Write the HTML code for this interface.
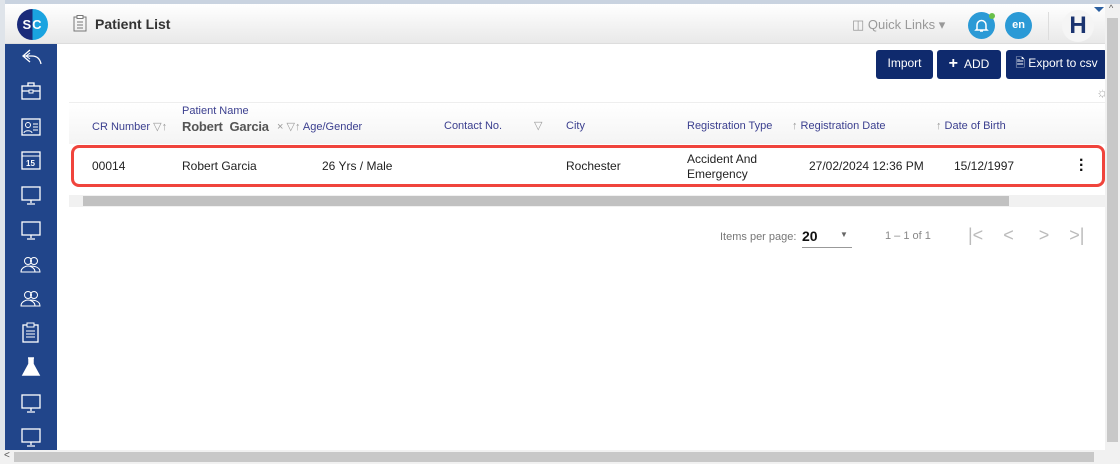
<!DOCTYPE html>
<html><head><style>
*{margin:0;padding:0;box-sizing:border-box}
body{width:1120px;height:464px;overflow:hidden;background:#fff;font-family:"Liberation Sans",sans-serif;position:relative;font-size:12px}
.a{position:absolute}
.hdr{left:5px;top:4px;width:1100px;height:40px;background:linear-gradient(#fff,#e9e9e9);border-bottom:1px solid #ddd}
.sb{left:5px;top:44px;width:52px;height:406px;background:#21458a}
.btn{background:#0f2a6d;color:#fff;border-radius:3px;height:29px;top:50px;font-size:12px;line-height:27px;text-align:center}
.th{color:#3b3f8f;font-size:11px;top:120px}
.td{color:#222;font-size:12px}
.ar{color:#999;font-size:11px}
</style></head><body>
<div class="a" style="left:0;top:0;width:1120px;height:4px;background:#c9d3e0"></div>
<div class="a" style="left:0;top:0;width:5px;height:464px;background:#dfe4ea"></div>
<div class="a hdr"></div>
<div class="a" style="left:17px;top:9px;width:31px;height:31px;border-radius:50%;background:linear-gradient(90deg,#1b2b7a 50%,#1aa3e0 50%);color:#fff;font-weight:bold;font-size:13px;line-height:31px;text-align:center;letter-spacing:1px">SC</div>
<svg class="a" style="left:73px;top:15px" width="14" height="17" viewBox="0 0 14 17"><rect x="1" y="2" width="12" height="14" fill="none" stroke="#777"/><rect x="4" y="0.5" width="6" height="3" fill="#fff" stroke="#777"/><path d="M4 7h6M4 10h6M4 13h6" stroke="#777"/></svg>
<div class="a" style="left:95px;top:16px;font-size:14px;font-weight:bold;color:#333">Patient List</div>
<div class="a" style="left:852px;top:17px;color:#999;font-size:13px">&#9707; Quick Links ▾</div>
<div class="a" style="left:968px;top:12px;width:27px;height:27px;border-radius:50%;background:#2b9ad6"></div>
<svg class="a" style="left:974px;top:18px" width="15" height="15"><path d="M3 11V7a4.5 4.5 0 0 1 9 0v4l1 1H2zM6 13h3" fill="none" stroke="#fff" stroke-width="1.5"/></svg>
<div class="a" style="left:989px;top:13px;width:6px;height:6px;border-radius:50%;background:#6ac04a"></div>
<div class="a" style="left:1005px;top:12px;width:27px;height:27px;border-radius:50%;background:#2b9ad6;color:#fff;text-align:center;line-height:27px;font-size:11px;font-weight:bold">en</div>
<div class="a" style="left:1048px;top:12px;width:1px;height:28px;background:#ddd"></div>
<div class="a" style="left:1062px;top:10px;width:32px;height:32px;border-radius:50%;background:#f5f5f5;color:#1b3470;font-weight:bold;font-size:24px;text-align:center;line-height:32px">H</div>
<div class="a" style="left:1094px;top:7px;width:0;height:0;border-left:5px solid transparent;border-right:5px solid transparent;border-top:5px solid #2b5fa0"></div>
<div class="a sb"></div>
<svg class="a" style="left:21px;top:48px" width="22" height="18"><path d="M9 2L2 8l7 6M2 8h9c5 0 8 3 9 8" fill="none" stroke="#fff" stroke-width="1.3"/><path d="M9 5L5 8l4 3" fill="none" stroke="#fff" stroke-width="1"/></svg>
<svg class="a" style="left:21px;top:82px" width="20" height="18"><rect x="1" y="4" width="18" height="13" fill="none" stroke="#fff" stroke-width="1.3"/><path d="M7 4V1h6v3M1 9h18" stroke="#fff" stroke-width="1.3" fill="none"/><rect x="8" y="8" width="4" height="3" fill="#21458a" stroke="#fff"/></svg>
<svg class="a" style="left:21px;top:116px" width="20" height="20"><rect x="1" y="3" width="18" height="16" fill="none" stroke="#fff" stroke-width="1.3"/><circle cx="7" cy="9" r="2.5" fill="none" stroke="#fff"/><path d="M3 17c0-3 8-3 8 0M12 8h5M12 11h5M12 14h5" stroke="#fff" fill="none"/></svg>
<svg class="a" style="left:21px;top:150px" width="20" height="20"><rect x="1" y="2" width="18" height="17" fill="none" stroke="#fff" stroke-width="1.3"/><path d="M1 6h18" stroke="#fff"/><text x="5" y="16" fill="#fff" font-size="8" font-family="Liberation Sans" font-weight="bold">15</text></svg>
<svg class="a" style="left:21px;top:185px" width="20" height="20"><rect x="1" y="2" width="18" height="13" fill="none" stroke="#fff" stroke-width="1.3"/><path d="M10 15v3M6 19h8" stroke="#fff" stroke-width="1.3"/></svg>
<svg class="a" style="left:21px;top:220px" width="20" height="20"><rect x="1" y="2" width="18" height="13" fill="none" stroke="#fff" stroke-width="1.3"/><path d="M10 15v3M6 19h8" stroke="#fff" stroke-width="1.3"/></svg>
<svg class="a" style="left:20px;top:255px" width="22" height="20"><circle cx="8" cy="6" r="3.5" fill="none" stroke="#fff"/><circle cx="14" cy="6" r="3.5" fill="none" stroke="#fff"/><path d="M1 17c0-5 6-6 7-6s7 1 7 6zM10 11c4 0 10 1 10 6h-5" fill="none" stroke="#fff"/></svg>
<svg class="a" style="left:20px;top:289px" width="22" height="20"><circle cx="8" cy="6" r="3.5" fill="none" stroke="#fff"/><circle cx="14" cy="6" r="3.5" fill="none" stroke="#fff"/><path d="M1 17c0-5 6-6 7-6s7 1 7 6zM10 11c4 0 10 1 10 6h-5" fill="none" stroke="#fff"/></svg>
<svg class="a" style="left:22px;top:322px" width="17" height="21"><rect x="1" y="3" width="15" height="17" fill="none" stroke="#fff" stroke-width="1.3"/><rect x="5" y="1" width="7" height="4" fill="#21458a" stroke="#fff"/><path d="M4 9h9M4 12h9M4 15h9" stroke="#fff"/></svg>
<svg class="a" style="left:21px;top:357px" width="20" height="20"><path d="M7 1h6M8 1v6L2 18h16L12 7V1" fill="#fff" stroke="#fff" stroke-width="1.5"/></svg>
<svg class="a" style="left:21px;top:393px" width="20" height="20"><rect x="1" y="2" width="18" height="13" fill="none" stroke="#fff" stroke-width="1.3"/><path d="M10 15v3M6 19h8" stroke="#fff" stroke-width="1.3"/></svg>
<svg class="a" style="left:21px;top:427px" width="20" height="20"><rect x="1" y="2" width="18" height="13" fill="none" stroke="#fff" stroke-width="1.3"/><path d="M10 15v3M6 19h8" stroke="#fff" stroke-width="1.3"/></svg>
<div class="a btn" style="left:876px;width:57px">Import</div>
<div class="a btn" style="left:937px;width:64px"><b style="font-size:16px">+</b>&nbsp; ADD</div>
<div class="a btn" style="left:1006px;width:101px">&#128462; Export to csv</div>
<div class="a" style="left:1096px;top:84px;color:#aaa;font-size:14px">&#9788;</div>
<div class="a" style="left:69px;top:102px;width:1036px;height:42px;background:linear-gradient(#fff,#f4f4f4);border-top:1px solid #eee"></div>
<div class="a th" style="left:92px">CR Number <span class="ar">&#9661;&#8593;</span></div>
<div class="a th" style="left:182px;top:105px">Patient Name</div>
<div class="a" style="left:182px;top:119px;font-size:13px;font-weight:bold;color:#555;letter-spacing:-0.2px">Robert&nbsp; Garcia</div>
<div class="a th" style="left:277px"><span class="ar">&#215; &#9661;&#8593;</span> Age/Gender</div>
<div class="a th" style="left:444px">Contact No.</div>
<div class="a ar" style="left:534px;top:119px">&#9661;</div>
<div class="a th" style="left:566px">City</div>
<div class="a th" style="left:687px">Registration Type</div>
<div class="a th" style="left:792px"><span class="ar">&#8593;</span> Registration Date</div>
<div class="a th" style="left:936px"><span class="ar">&#8593;</span> Date of Birth</div>
<div class="a" style="left:71px;top:145px;width:1034px;height:42px;border:3px solid #f0443c;border-radius:8px"></div>
<div class="a td" style="left:92px;top:159px">00014</div>
<div class="a td" style="left:182px;top:159px">Robert Garcia</div>
<div class="a td" style="left:322px;top:159px">26 Yrs / Male</div>
<div class="a td" style="left:566px;top:159px">Rochester</div>
<div class="a td" style="left:687px;top:152px;line-height:15px">Accident And<br>Emergency</div>
<div class="a td" style="left:809px;top:159px">27/02/2024 12:36 PM</div>
<div class="a td" style="left:954px;top:159px">15/12/1997</div>
<div class="a" style="left:1079px;top:158px;font-size:16px;font-weight:bold;line-height:5px;color:#111">·<br>·<br>·</div>
<div class="a" style="left:69px;top:195px;width:1036px;height:12px;background:#f1f1f1"></div>
<div class="a" style="left:83px;top:196px;width:926px;height:10px;background:#c1c1c1"></div>
<div class="a" style="left:720px;top:231px;color:#777;font-size:11px">Items per page:</div>
<div class="a" style="left:802px;top:228px;font-size:14px;font-weight:bold;color:#111">20</div>
<div class="a" style="left:840px;top:230px;color:#666;font-size:8px">▼</div>
<div class="a" style="left:802px;top:247px;width:50px;height:1px;background:#999"></div>
<div class="a" style="left:885px;top:230px;color:#888;font-size:11px">1 – 1 of 1</div>
<div class="a" style="left:968px;top:225px;color:#bbb;font-size:18px;letter-spacing:0">|&lt;&nbsp;&nbsp;&nbsp;&nbsp;&lt;&nbsp;&nbsp;&nbsp;&nbsp;&nbsp;&gt;&nbsp;&nbsp;&nbsp;&nbsp;&gt;|</div>
<div class="a" style="left:1105px;top:4px;width:15px;height:446px;background:#f1f1f1"></div>
<div class="a" style="left:1107px;top:18px;width:11px;height:424px;background:#c8c8c8"></div>
<div class="a" style="left:1109px;top:3px;font-size:9px;color:#555">^</div>
<div class="a" style="left:0;top:450px;width:1120px;height:14px;background:#f1f1f1"></div>
<div class="a" style="left:14px;top:452px;width:1080px;height:10px;background:#c8c8c8"></div>
<div class="a" style="left:4px;top:450px;font-size:10px;color:#555">&lt;</div>
</body></html>
